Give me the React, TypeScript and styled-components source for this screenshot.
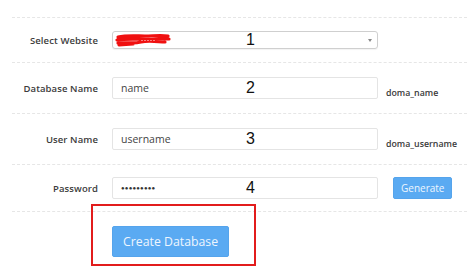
import React from 'react'
import styled, { createGlobalStyle } from 'styled-components'

const GlobalStyle = createGlobalStyle`
  html, body {
    margin: 0;
    padding: 0;
    background: #fff;
    font-family: 'Open Sans', 'Liberation Sans', sans-serif;
  }
`

const Page = styled.div`
  position: relative;
  width: 474px;
  height: 280px;
  padding: 17px 7px 0 12px;
  box-sizing: border-box;
  overflow: hidden;
`

const Form = styled.div`
  border-top: 1px dashed #e6e6e6;
`

const Row = styled.div<{ $pad: number }>`
  display: grid;
  grid-template-columns: 100px 266px auto;
  align-items: center;
  padding: ${(p) => p.$pad}px 0;
  border-bottom: 1px dashed #e6e6e6;
`

const ButtonRow = styled.div`
  display: grid;
  grid-template-columns: 100px auto;
  padding-top: 14px;
`

const Label = styled.label`
  text-align: right;
  padding-right: 14px;
  font-size: 9.5px;
  font-weight: 600;
  letter-spacing: 0.1px;
  color: #3c3c3c;
`

const Field = styled.div<{ $h: number }>`
  position: relative;
  height: ${(p) => p.$h}px;
  box-sizing: border-box;
  display: flex;
  align-items: center;
  padding: 0 8px;
  border: 1px solid #e4e4e4;
  border-radius: 2px;
  font-size: 10.5px;
  color: #444;
`

const SelectField = styled(Field)`
  border-color: #cfcfcf;
  border-radius: 3px;
  padding: 0 2px;
  box-shadow: 0 1px 1px rgba(0, 0, 0, 0.05);
`

const Caret = styled.span`
  position: absolute;
  right: 5px;
  top: 7px;
  width: 0;
  height: 0;
  border-left: 2.5px solid transparent;
  border-right: 2.5px solid transparent;
  border-top: 3px solid #888;
`

const Mark = styled.span`
  position: absolute;
  left: 133px;
  top: 50%;
  transform: translateY(-52%);
  font-family: 'Liberation Sans', Arial, sans-serif;
  font-size: 16px;
  color: #111;
`

const Hint = styled.span`
  padding-left: 8px;
  padding-top: 10px;
  font-size: 8.8px;
  font-weight: 600;
  color: #3a3a3a;
`

const Dots = styled.span`
  font-size: 6px;
  letter-spacing: 0.2px;
  color: #333;
  font-weight: 700;
`

const BlueButton = styled.button<{ $small?: boolean }>`
  font-family: 'Open Sans', 'Liberation Sans', sans-serif;
  background: #5aaaf2;
  border: 1px solid #55a4ec;
  border-radius: 2px;
  color: #eef6fe;
  cursor: pointer;
  height: ${(p) => (p.$small ? 22 : 31)}px;
  padding: 0 ${(p) => (p.$small ? 7 : 10)}px;
  font-size: ${(p) => (p.$small ? 10 : 12.3)}px;
  justify-self: start;
`

const GenerateButton = styled(BlueButton)`
  margin-left: 15px;
`

const RedFrame = styled.div`
  position: absolute;
  left: 91px;
  top: 204px;
  width: 165px;
  height: 62px;
  box-sizing: border-box;
  border: 2px solid #e21c1c;
`

const Scribble = () => (
  <svg width="56" height="14" viewBox="0 0 56 14">
    <path
      d="M3 4 C 12 2, 22 3, 30 3 S 46 2, 53 3 M2 7 C 14 5, 28 7, 40 6 S 50 6, 54 6 M3 10 C 12 9, 18 11, 26 9 S 44 9, 50 9 M4 12 L 18 11"
      stroke="#f01010"
      strokeWidth="3.2"
      fill="none"
      strokeLinecap="round"
    />
    <path d="M26 7.5 L 40 7.5" stroke="#ff9a9a" strokeWidth="0.8" strokeDasharray="2 1" />
  </svg>
)

export default function App() {
  return (
    <>
      <GlobalStyle />
      <Page>
        <Form>
          <Row $pad={13}>
            <Label>Select Website</Label>
            <SelectField $h={18}>
              <Scribble />
              <Mark>1</Mark>
              <Caret />
            </SelectField>
          </Row>
          <Row $pad={14}>
            <Label>Database Name</Label>
            <Field $h={22}>
              name
              <Mark>2</Mark>
            </Field>
            <Hint>doma_name</Hint>
          </Row>
          <Row $pad={14}>
            <Label>User Name</Label>
            <Field $h={22}>
              username
              <Mark>3</Mark>
            </Field>
            <Hint>doma_username</Hint>
          </Row>
          <Row $pad={12}>
            <Label>Password</Label>
            <Field $h={22}>
              <Dots>●●●●●●●●●</Dots>
              <Mark>4</Mark>
            </Field>
            <GenerateButton $small>Generate</GenerateButton>
          </Row>
          <ButtonRow>
            <span />
            <BlueButton>Create Database</BlueButton>
          </ButtonRow>
        </Form>
        <RedFrame />
      </Page>
    </>
  )
}
